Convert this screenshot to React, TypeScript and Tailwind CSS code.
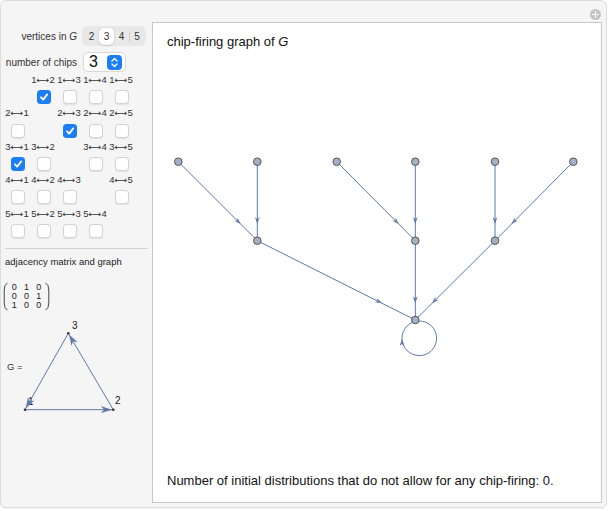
import React from "react";

type P = [number, number];

function arrowPts(tip: P, from: P, L: number, W: number): string {
  const dx = tip[0] - from[0];
  const dy = tip[1] - from[1];
  const len = Math.hypot(dx, dy) || 1;
  const d: P = [dx / len, dy / len];
  const n: P = [-d[1], d[0]];
  const a: P = [tip[0] - L * d[0] + W * n[0], tip[1] - L * d[1] + W * n[1]];
  const m: P = [tip[0] - 0.7 * L * d[0], tip[1] - 0.7 * L * d[1]];
  const b: P = [tip[0] - L * d[0] - W * n[0], tip[1] - L * d[1] - W * n[1]];
  return [tip, a, m, b].map((p) => `${p[0].toFixed(2)},${p[1].toFixed(2)}`).join(" ");
}

const EDGE = "#5f7aa6";

function BigGraph() {
  const ty = 161.7;
  const my = 240.7;
  const top: P[] = [178.3, 257.3, 336.7, 415.3, 495, 573.3].map((x) => [x, ty] as P);
  const mid: P[] = [257.3, 415.3, 495].map((x) => [x, my] as P);
  const bot: P = [415.3, 320];
  const edges: [P, P][] = [
    [top[0], mid[0]],
    [top[1], mid[0]],
    [top[2], mid[1]],
    [top[3], mid[1]],
    [top[4], mid[2]],
    [top[5], mid[2]],
    [mid[0], bot],
    [mid[1], bot],
    [mid[2], bot],
  ];
  const all = [...top, ...mid, bot];
  return (
    <svg className="block" width={448} height={421} viewBox="153 51 448 421">
      {edges.map(([a, b], i) => {
        const f = 0.79;
        const tip: P = [a[0] + (b[0] - a[0]) * f, a[1] + (b[1] - a[1]) * f];
        return (
          <g key={i}>
            <line x1={a[0]} y1={a[1]} x2={b[0]} y2={b[1]} stroke={EDGE} strokeWidth={1} />
            <polygon points={arrowPts(tip, a, 7, 2.4)} fill={EDGE} />
          </g>
        );
      })}
      <circle cx={419.3} cy={338.3} r={17.3} fill="none" stroke={EDGE} strokeWidth={1} />
      <polygon points={arrowPts([402, 339], [402, 346], 7, 2.4)} fill={EDGE} />
      {all.map((p, i) => (
        <circle key={i} cx={p[0]} cy={p[1]} r={3.8} fill="#a3afc3" stroke="#4a4a4a" strokeWidth={0.9} />
      ))}
    </svg>
  );
}

function SmallGraph() {
  const n1: P = [25, 410.7];
  const n2: P = [113.3, 410.7];
  const n3: P = [68.3, 334.3];
  const tipNear = (a: P, b: P, g: number): P => {
    const dx = b[0] - a[0];
    const dy = b[1] - a[1];
    const len = Math.hypot(dx, dy);
    return [b[0] - (dx / len) * g, b[1] - (dy / len) * g];
  };
  const es: [P, P][] = [
    [n1, n2],
    [n2, n3],
    [n3, n1],
  ];
  return (
    <svg className="block" width={150} height={108} viewBox="1 318 150 108">
      <text x={7} y={371} fontSize={9.5} fill="#333" fontFamily="'Liberation Sans', Arial, sans-serif">
        G =
      </text>
      <text x={72} y={330} fontSize={10} fill="#222" fontFamily="'Liberation Sans', Arial, sans-serif">
        3
      </text>
      <text x={115} y={405} fontSize={10} fill="#222" fontFamily="'Liberation Sans', Arial, sans-serif">
        2
      </text>
      <text x={28} y={406} fontSize={10} fill="#222" fontFamily="'Liberation Sans', Arial, sans-serif">
        1
      </text>
      {es.map(([a, b], i) => (
        <g key={i}>
          <line x1={a[0]} y1={a[1]} x2={b[0]} y2={b[1]} stroke={EDGE} strokeWidth={1} />
          <polygon points={arrowPts(tipNear(a, b, 1.5), a, 11, 3.6)} fill={EDGE} />
        </g>
      ))}
      {[n1, n2, n3].map((p, i) => (
        <circle key={i} cx={p[0]} cy={p[1]} r={1.3} fill="#333" />
      ))}
    </svg>
  );
}

function Check({ on }: { on: boolean }) {
  if (on) {
    return (
      <div className="w-[14px] h-[14px] rounded-[3.5px] bg-[#1b7ef5] flex items-center justify-center">
        <svg width="10" height="10" viewBox="0 0 10 10">
          <path d="M2 5.3 L4.2 7.6 L8.2 2.4" fill="none" stroke="white" strokeWidth={1.8} strokeLinecap="round" strokeLinejoin="round" />
        </svg>
      </div>
    );
  }
  return <div className="w-[14px] h-[14px] rounded-[3.5px] bg-white border border-[#d2d2d2] shadow-[0_0.5px_1px_rgba(0,0,0,0.08)]" />;
}

function Paren({ right }: { right?: boolean }) {
  return (
    <svg width="5" height="29" viewBox="0 0 5 29" className="block" style={right ? { transform: "scaleX(-1)" } : undefined}>
      <path d="M4.5 0.8 Q1.2 2.5 1.2 8 L1.2 21 Q1.2 26.5 4.5 28.2" fill="none" stroke="#333" strokeWidth={0.9} />
    </svg>
  );
}

const checked: Record<string, boolean> = { "1-2": true, "2-3": true, "3-1": true };

export default function App() {
  const rows = [1, 2, 3, 4, 5];
  return (
    <div className="w-[608px] h-[511px] bg-white" style={{ fontFamily: "'Liberation Sans', Arial, sans-serif" }}>
      <div className="relative w-[607px] h-[508px] rounded-[6px] border border-[#dedede] bg-[#f5f5f5] flex shadow-[0_1px_1px_rgba(0,0,0,0.06)]">
        <div className="absolute right-[5px] top-[8px] w-[11px] h-[11px] rounded-full bg-[#c4c4c4] flex items-center justify-center">
          <div className="relative w-[7px] h-[7px]">
            <div className="absolute left-0 top-[3px] w-[7px] h-[1.4px] bg-white" />
            <div className="absolute top-0 left-[3px] w-[1.4px] h-[7px] bg-white" />
          </div>
        </div>
        {/* left controls */}
        <div className="w-[151px] shrink-0 flex flex-col">
          <div className="mt-[25px] h-[20px] flex items-center">
            <div className="w-[76px] text-right text-[10px] text-[#333]">
              vertices in <span className="italic">G</span>
            </div>
            <div className="ml-[5px] w-[64px] h-[20px] rounded-[6px] bg-[#e8e8e8] flex items-center px-[2px] text-[10px] text-[#333]">
              <div className="w-[15px] text-center">2</div>
              <div className="w-[15px] h-[17px] rounded-[5px] bg-white shadow-[0_0.5px_1.5px_rgba(0,0,0,0.25)] flex items-center justify-center">3</div>
              <div className="w-[15px] text-center">4</div>
              <div className="w-[1px] h-[11px] bg-[#d0d0d0]" />
              <div className="w-[14px] text-center">5</div>
            </div>
          </div>
          <div className="mt-[6px] h-[20px] flex items-center">
            <div className="w-[76px] text-right text-[10px] text-[#333]">number of chips</div>
            <div className="ml-[6px] w-[43px] h-[20px] rounded-[5px] bg-white border border-[#d8d8d8] flex items-center justify-between pl-[5px] pr-[3px]">
              <span className="text-[16px] leading-[16px] text-[#111]">3</span>
              <div className="w-[15px] h-[15px] rounded-[4px] bg-[#1b7ef5] flex items-center justify-center">
                <svg width="9" height="11" viewBox="0 0 9 11">
                  <path d="M2 4 L4.5 1.6 L7 4 M2 7 L4.5 9.4 L7 7" fill="none" stroke="white" strokeWidth={1.4} strokeLinecap="round" strokeLinejoin="round" />
                </svg>
              </div>
            </div>
          </div>
          <div className="pl-[4px] flex flex-col">
            {rows.map((i) => (
              <div key={i} className="h-[33.4px] flex flex-col">
                <div className="h-[17px] flex">
                  {rows.map((j) => (
                    <div key={j} className="w-[26px] text-center text-[9.5px] leading-[16px] text-[#333] whitespace-nowrap pr-[2px]">
                      {i !== j ? (
                        <span>
                          {i}
                          <span style={{ fontFamily: "'DejaVu Sans', sans-serif" }} className="text-[9px]">⟷</span>
                          {j}
                        </span>
                      ) : null}
                    </div>
                  ))}
                </div>
                <div className="h-[16.4px] flex items-center">
                  {rows.map((j) => (
                    <div key={j} className="w-[26px] flex justify-center">
                      {i !== j ? <Check on={!!checked[`${i}-${j}`]} /> : null}
                    </div>
                  ))}
                </div>
              </div>
            ))}
          </div>
          <div className="mt-[9px] ml-[4px] w-[143px] h-[1px] bg-[#d3d3d3]" />
          <div className="mt-[6px] pl-[4px] text-[9.5px] leading-[14px] text-[#222]">adjacency matrix and graph</div>
          <div className="mt-[13px] ml-[2px] flex items-center w-[47px]">
            <Paren />
            <div className="flex-1 grid grid-cols-3 text-[9px] leading-[9px] text-[#222] text-center">
              {["0", "1", "0", "0", "0", "1", "1", "0", "0"].map((v, k) => (
                <div key={k} className="h-[9px]">{v}</div>
              ))}
            </div>
            <Paren right />
          </div>
          <div className="mt-[6px]">
            <SmallGraph />
          </div>
        </div>
        {/* right panel */}
        <div className="mt-[21px] mb-[5px] w-[450px] h-[481px] bg-white border border-[#c9c9c9] flex flex-col">
          <div className="pt-[10px] pl-[14px] h-[28px] text-[13px] leading-[18px] text-[#111]">
            chip-firing graph of <span className="italic">G</span>
          </div>
          <BigGraph />
          <div className="pl-[14px] text-[13px] leading-[18px] text-[#111]">
            Number of initial distributions that do not allow for any chip-firing: 0.
          </div>
        </div>
      </div>
    </div>
  );
}
